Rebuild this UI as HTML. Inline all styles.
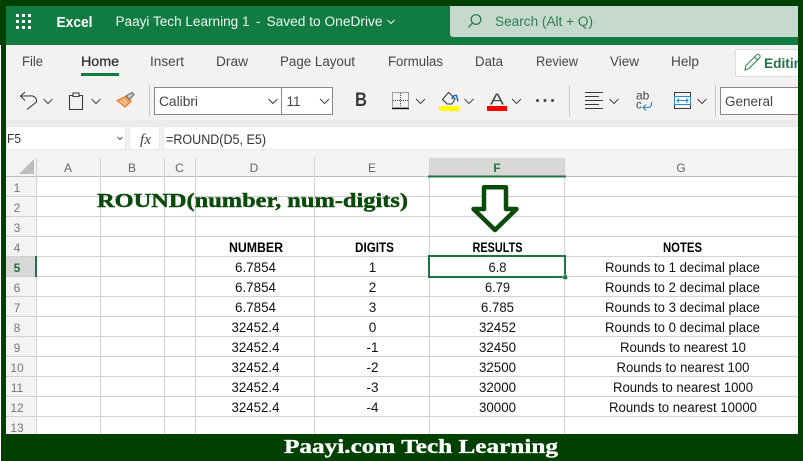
<!DOCTYPE html>
<html lang="en">
<head>
<meta charset="utf-8">
<title>Paayi Tech Learning - ROUND</title>
<style>
html,body{margin:0;padding:0;background:#fff;width:803px;height:461px;overflow:hidden}
svg{display:block;position:absolute;left:0;top:0}
text{font-family:"Liberation Sans",sans-serif;white-space:pre}
.t{font-size:13.5px;fill:#484644}
.c{font-size:13.5px;fill:#111;text-anchor:middle}
.b{font-size:13.5px;fill:#000;font-weight:bold;text-anchor:middle}
.r{font-size:12px;fill:#777;text-anchor:middle}
.h{font-size:12px;fill:#666;text-anchor:middle}
.ic{fill:none;stroke:#3b3a39;stroke-width:1.1}
.ch{fill:none;stroke:#484644;stroke-width:1}
.g{stroke:#d2d2d2;stroke-width:1}
</style>
</head>
<body>
<svg width="803" height="461" viewBox="0 0 803 461" xmlns="http://www.w3.org/2000/svg">
<rect width="803" height="461" fill="#fff"/>
<!-- header -->
<rect x="6" y="6" width="792" height="39" fill="#107c41"/>
<g fill="#fff">
<rect x="16" y="14" width="3" height="3"/><rect x="22" y="14" width="3" height="3"/><rect x="28" y="14" width="3" height="3"/>
<rect x="16" y="20" width="3" height="3"/><rect x="22" y="20" width="3" height="3"/><rect x="28" y="20" width="3" height="3"/>
<rect x="16" y="26" width="3" height="3"/><rect x="22" y="26" width="3" height="3"/><rect x="28" y="26" width="3" height="3"/>
</g>
<text x="56.500" y="27" font-size="15" font-weight="bold" fill="#fff" textLength="36" lengthAdjust="spacingAndGlyphs">Excel</text>
<text x="115.500" y="26" font-size="13.500" fill="#f0f7f2" textLength="134" lengthAdjust="spacingAndGlyphs">Paayi Tech Learning 1</text>
<text x="256" y="26" font-size="13.500" fill="#f0f7f2">-</text>
<text x="266.500" y="26" font-size="13.500" fill="#f0f7f2" textLength="116" lengthAdjust="spacingAndGlyphs">Saved to OneDrive</text>
<path d="M387.500 20l3.500 3.500 3.500-3.500" fill="none" stroke="#e6f2ea" stroke-width="1"/>
<path d="M450 6H798V37H453a3 3 0 0 1-3-3Z" fill="#c5d9cc"/>
<circle cx="476" cy="19.500" r="4.800" fill="none" stroke="#217346" stroke-width="1.200"/>
<path d="M472.500 23L468.500 27.500" stroke="#217346" stroke-width="1.300" fill="none"/>
<text x="495" y="26" font-size="13.500" fill="#2f7d55" textLength="98" lengthAdjust="spacingAndGlyphs">Search (Alt + Q)</text>
<!-- ribbon -->
<rect x="6" y="45" width="792" height="75" fill="#f3f2f1"/>
<rect x="6" y="120" width="792" height="6" fill="#ebebeb"/>
<text class="t" x="22" y="66" textLength="21" lengthAdjust="spacingAndGlyphs">File</text>
<text class="t" x="81" y="66" textLength="38" lengthAdjust="spacingAndGlyphs" style="fill:#323130;stroke:#323130;stroke-width:.25">Home</text>
<rect x="81" y="73" width="38" height="3" fill="#107c41"/>
<text class="t" x="150" y="66" textLength="34" lengthAdjust="spacingAndGlyphs">Insert</text>
<text class="t" x="216" y="66" textLength="32" lengthAdjust="spacingAndGlyphs">Draw</text>
<text class="t" x="280" y="66" textLength="75" lengthAdjust="spacingAndGlyphs">Page Layout</text>
<text class="t" x="388" y="66" textLength="55" lengthAdjust="spacingAndGlyphs">Formulas</text>
<text class="t" x="475" y="66" textLength="28" lengthAdjust="spacingAndGlyphs">Data</text>
<text class="t" x="536" y="66" textLength="42" lengthAdjust="spacingAndGlyphs">Review</text>
<text class="t" x="610" y="66" textLength="29" lengthAdjust="spacingAndGlyphs">View</text>
<text class="t" x="671" y="66" textLength="28" lengthAdjust="spacingAndGlyphs">Help</text>
<rect x="735.500" y="49.500" width="70" height="27" rx="2" fill="#fff" stroke="#dedcda"/>
<path d="M745 70l1-4.500 10.500-10.500a1.800 1.800 0 0 1 3 3L749 68.500Z M754.500 57l3 3" fill="none" stroke="#2e8b57" stroke-width="1.100"/>
<text x="764" y="68" font-size="13.500" font-weight="bold" fill="#217346" textLength="38" lengthAdjust="spacingAndGlyphs">Editin</text>
<!-- undo -->
<path d="M25 92L20.500 96 25 100.500M20.500 96H29C34 95 37 98 36.500 102L27 109.500" class="ic"/>
<path class="ch" d="M43.500 99l4.500 4.500 4.500-4.500"/>
<!-- clipboard -->
<path class="ic" d="M73 95.500H69.500V109.500H82.500V95.500H79M73 96.500V93H79V96.500H73Z"/>
<path class="ch" d="M91.500 99l4.500 4.500 4.500-4.500"/>
<!-- brush -->
<path d="M117 100.500L127.500 95.500 131 101.500 125 107Z" fill="#f4a460" stroke="#e8781e" stroke-width="1"/>
<path d="M120 101l5 3.500M123 99l4 4" stroke="#fff" stroke-width=".7"/>
<path d="M126 96l3.500 3.500 4.500-5-2-2Z" fill="#cfcdcb" stroke="#605e5c" stroke-width="1"/>
<line x1="149.500" y1="85" x2="149.500" y2="117" stroke="#c8c6c4"/>
<!-- font boxes -->
<rect x="154.500" y="87.500" width="178" height="27" fill="#fff" stroke="#8a8886"/>
<line x1="281.500" y1="88" x2="281.500" y2="114" stroke="#8a8886"/>
<text x="159" y="106" font-size="13.500" fill="#444" textLength="39" lengthAdjust="spacingAndGlyphs">Calibri</text>
<path class="ch" d="M268.500 99l4.500 4.500 4.500-4.500"/>
<text x="286.500" y="106" font-size="13.500" fill="#444">11</text>
<path class="ch" d="M320 99l4.500 4.500 4.500-4.500"/>
<text x="355" y="106" font-size="19" font-weight="bold" fill="#3b3a39" textLength="12" lengthAdjust="spacingAndGlyphs">B</text>
<!-- borders -->
<rect x="392.500" y="92.500" width="16" height="15" fill="none" stroke="#484644" stroke-dasharray="1 1"/>
<path d="M400.500 93V107M393 100.500H408" stroke="#484644" stroke-dasharray="1 1"/>
<rect x="392" y="108" width="17" height="1.200" fill="#111"/>
<path class="ch" d="M416 99l4.500 4.500 4.500-4.500"/>
<!-- fill -->
<path class="ic" d="M442.500 99.500l6-7 1.500 1 5 5.500-3 5H447Z"/>
<path d="M452 99c.5-3 3-4 4.500-3.500l1.500 6" fill="none" stroke="#1a6fb5" stroke-width="1.500"/>
<rect x="439" y="106" width="20" height="5" fill="#ff0"/>
<path class="ch" d="M464.500 99l4.500 4.500 4.500-4.500"/>
<!-- font color -->
<text x="490" y="104.500" font-size="16" fill="#484644" textLength="14" lengthAdjust="spacingAndGlyphs">A</text>
<rect x="487" y="106" width="20" height="5" fill="#f00"/>
<path class="ch" d="M512 99l4.500 4.500 4.500-4.500"/>
<g fill="#484644"><circle cx="537.500" cy="100.500" r="1.500"/><circle cx="545" cy="100.500" r="1.500"/><circle cx="552.500" cy="100.500" r="1.500"/></g>
<line x1="569.500" y1="85" x2="569.500" y2="117" stroke="#c8c6c4"/>
<!-- align -->
<path d="M585 92.500H603M585 96.500H599M585 100.500H603M585 104.500H599M585 108.500H603" stroke="#3b3a39" fill="none"/>
<path class="ch" d="M609.500 99l4.500 4.500 4.500-4.500"/>
<!-- wrap -->
<text x="636" y="99.500" font-size="12" fill="#484644">ab</text>
<text x="636" y="108.500" font-size="12" fill="#484644">c</text>
<path d="M651.500 102c.5 3.500-1 5.500-3.500 5.500H643.500M646 104.500l-3 3 3 3" fill="none" stroke="#2b88d8" stroke-width="1.100"/>
<!-- merge -->
<rect x="674.500" y="92.500" width="16" height="16" fill="none" stroke="#3b3a39"/>
<rect x="674.500" y="96.500" width="16" height="8" fill="#fff" stroke="#2b88d8"/>
<path d="M677 100.500H688M679 98.500l-2 2 2 2M686 98.500l2 2-2 2" fill="none" stroke="#2b88d8"/>
<path class="ch" d="M697.500 99l4.500 4.500 4.500-4.500"/>
<line x1="715.500" y1="85" x2="715.500" y2="117" stroke="#c8c6c4"/>
<rect x="720.500" y="87.500" width="90" height="27" fill="#fff" stroke="#8a8886"/>
<text x="725" y="106" font-size="13.500" fill="#444" textLength="48" lengthAdjust="spacingAndGlyphs">General</text>
<!-- formula bar -->
<rect x="6" y="126" width="792" height="24" fill="#f3f2f1"/>
<rect x="6.500" y="126.500" width="119" height="23" fill="#fff" stroke="#e8e8e8"/>
<rect x="129.500" y="126.500" width="30" height="23" fill="#fff" stroke="#e8e8e8"/>
<rect x="163.500" y="126.500" width="635" height="23" fill="#fff" stroke="#e8e8e8"/>
<text x="7" y="143" font-size="13" fill="#333" textLength="14" lengthAdjust="spacingAndGlyphs">F5</text>
<path d="M117.500 137l2.500 2.500 2.500-2.500" fill="none" stroke="#555"/>
<text x="140" y="144" font-size="15" font-style="italic" fill="#444" textLength="11" lengthAdjust="spacingAndGlyphs" style="font-family:'Liberation Serif',serif">fx</text>
<text x="166" y="144" font-size="13.500" fill="#333" textLength="100" lengthAdjust="spacingAndGlyphs">=ROUND(D5, E5)</text>
<!-- sheet -->
<rect x="6" y="150" width="792" height="27" fill="#f3f3f3"/>
<rect x="6" y="177" width="31" height="257" fill="#f3f3f3"/>
<path d="M19 174H34V159Z" fill="#bdbdbd"/>
<rect x="429" y="158" width="136" height="19" fill="#d9d8d6"/>
<rect x="6" y="257" width="30" height="20" fill="#d9d8d6"/>
<!-- grid -->
<g class="g">
<line x1="6" y1="176.500" x2="798" y2="176.500" stroke="#bdbdbd"/>
<line x1="6" y1="196.500" x2="798" y2="196.500"/>
<line x1="6" y1="216.500" x2="798" y2="216.500"/>
<line x1="6" y1="236.500" x2="798" y2="236.500"/>
<line x1="6" y1="256.500" x2="798" y2="256.500"/>
<line x1="6" y1="276.500" x2="798" y2="276.500"/>
<line x1="6" y1="296.500" x2="798" y2="296.500"/>
<line x1="6" y1="316.500" x2="798" y2="316.500"/>
<line x1="6" y1="336.500" x2="798" y2="336.500"/>
<line x1="6" y1="356.500" x2="798" y2="356.500"/>
<line x1="6" y1="376.500" x2="798" y2="376.500"/>
<line x1="6" y1="396.500" x2="798" y2="396.500"/>
<line x1="6" y1="416.500" x2="798" y2="416.500"/>
<line x1="36.500" y1="158" x2="36.500" y2="434"/>
<line x1="100.500" y1="158" x2="100.500" y2="434"/>
<line x1="164.500" y1="158" x2="164.500" y2="434"/>
<line x1="195.500" y1="158" x2="195.500" y2="434"/>
<line x1="314.500" y1="158" x2="314.500" y2="434"/>
<line x1="429.500" y1="158" x2="429.500" y2="434"/>
<line x1="564.500" y1="158" x2="564.500" y2="434"/>
</g>
<rect x="428" y="175.500" width="138" height="2" fill="#217346"/>
<rect x="35" y="256" width="2" height="21" fill="#217346"/>
<!-- column headers -->
<text class="h" x="68" y="172">A</text><text class="h" x="132" y="172">B</text><text class="h" x="179.500" y="172">C</text><text class="h" x="254" y="172">D</text><text class="h" x="372" y="172">E</text>
<text class="h" x="497" y="172" style="fill:#217346;font-weight:bold">F</text><text class="h" x="681" y="172">G</text>
<!-- row headers -->
<text class="r" x="17" y="192">1</text><text class="r" x="17" y="212">2</text><text class="r" x="17" y="232">3</text><text class="r" x="17" y="252">4</text>
<text class="r" x="17" y="272" style="fill:#217346;font-weight:bold">5</text>
<text class="r" x="17" y="292">6</text><text class="r" x="17" y="312">7</text><text class="r" x="17" y="332">8</text><text class="r" x="17" y="352">9</text>
<text class="r" x="17" y="372">10</text><text class="r" x="17" y="392">11</text><text class="r" x="17" y="412">12</text><text class="r" x="17" y="432">13</text>
<!-- title -->
<text x="97" y="207" font-size="20" font-weight="bold" fill="#0a4a0a" stroke="#0a4a0a" stroke-width=".45" textLength="311" lengthAdjust="spacingAndGlyphs" style="font-family:'Liberation Serif',serif">ROUND(number, num-digits)</text>
<!-- arrow -->
<path d="M484 187.300H506V209H516.500L495 230 473.500 209H484Z" fill="#fff" stroke="#0a4a0a" stroke-width="4.500" stroke-linejoin="round"/>
<!-- table headers -->
<text class="b" x="256" y="252" textLength="54" lengthAdjust="spacingAndGlyphs">NUMBER</text>
<text class="b" x="374.500" y="252" textLength="39" lengthAdjust="spacingAndGlyphs">DIGITS</text>
<text class="b" x="497.500" y="252" textLength="50" lengthAdjust="spacingAndGlyphs">RESULTS</text>
<text class="b" x="682.500" y="252" textLength="39" lengthAdjust="spacingAndGlyphs">NOTES</text>
<!-- rows -->
<text class="c" x="255.500" y="272" textLength="41" lengthAdjust="spacingAndGlyphs">6.7854</text><text class="c" x="372.500" y="272">1</text><text class="c" x="497.500" y="272" textLength="18" lengthAdjust="spacingAndGlyphs">6.8</text><text class="c" x="682.500" y="272" textLength="155" lengthAdjust="spacingAndGlyphs">Rounds to 1 decimal place</text>
<text class="c" x="255.500" y="292" textLength="41" lengthAdjust="spacingAndGlyphs">6.7854</text><text class="c" x="372.500" y="292">2</text><text class="c" x="497.500" y="292" textLength="25" lengthAdjust="spacingAndGlyphs">6.79</text><text class="c" x="682.500" y="292" textLength="155" lengthAdjust="spacingAndGlyphs">Rounds to 2 decimal place</text>
<text class="c" x="255.500" y="312" textLength="41" lengthAdjust="spacingAndGlyphs">6.7854</text><text class="c" x="372.500" y="312">3</text><text class="c" x="497.500" y="312" textLength="33" lengthAdjust="spacingAndGlyphs">6.785</text><text class="c" x="682.500" y="312" textLength="155" lengthAdjust="spacingAndGlyphs">Rounds to 3 decimal place</text>
<text class="c" x="255.500" y="332" textLength="48" lengthAdjust="spacingAndGlyphs">32452.4</text><text class="c" x="372.500" y="332">0</text><text class="c" x="497.500" y="332" textLength="37" lengthAdjust="spacingAndGlyphs">32452</text><text class="c" x="682.500" y="332" textLength="155" lengthAdjust="spacingAndGlyphs">Rounds to 0 decimal place</text>
<text class="c" x="255.500" y="352" textLength="48" lengthAdjust="spacingAndGlyphs">32452.4</text><text class="c" x="372.500" y="352">-1</text><text class="c" x="497.500" y="352" textLength="37" lengthAdjust="spacingAndGlyphs">32450</text><text class="c" x="683" y="352" textLength="126" lengthAdjust="spacingAndGlyphs">Rounds to nearest 10</text>
<text class="c" x="255.500" y="372" textLength="48" lengthAdjust="spacingAndGlyphs">32452.4</text><text class="c" x="372.500" y="372">-2</text><text class="c" x="497.500" y="372" textLength="37" lengthAdjust="spacingAndGlyphs">32500</text><text class="c" x="683" y="372" textLength="133" lengthAdjust="spacingAndGlyphs">Rounds to nearest 100</text>
<text class="c" x="255.500" y="392" textLength="48" lengthAdjust="spacingAndGlyphs">32452.4</text><text class="c" x="372.500" y="392">-3</text><text class="c" x="497.500" y="392" textLength="37" lengthAdjust="spacingAndGlyphs">32000</text><text class="c" x="683" y="392" textLength="140" lengthAdjust="spacingAndGlyphs">Rounds to nearest 1000</text>
<text class="c" x="255.500" y="412" textLength="48" lengthAdjust="spacingAndGlyphs">32452.4</text><text class="c" x="372.500" y="412">-4</text><text class="c" x="497.500" y="412" textLength="37" lengthAdjust="spacingAndGlyphs">30000</text><text class="c" x="683" y="412" textLength="148" lengthAdjust="spacingAndGlyphs">Rounds to nearest 10000</text>
<!-- selection -->
<rect x="429" y="256" width="136" height="21" fill="none" stroke="#217346" stroke-width="2"/>
<rect x="563" y="275" width="4.500" height="4.500" fill="#217346" stroke="#fff" stroke-width=".5"/>
<!-- frame -->
<rect x="0" y="0" width="803" height="6" fill="#004000"/>
<rect x="0" y="0" width="6" height="45" fill="#004000"/>
<rect x="1" y="45" width="5" height="390" fill="#004000"/>
<rect x="798" y="0" width="5" height="461" fill="#004000"/>
<rect x="1" y="434" width="802" height="27" fill="#004000"/>
<text x="284" y="453" font-size="20" font-weight="bold" fill="#fff" stroke="#fff" stroke-width=".35" textLength="274" lengthAdjust="spacingAndGlyphs" style="font-family:'Liberation Serif',serif">Paayi.com Tech Learning</text>
</svg>
</body>
</html>
